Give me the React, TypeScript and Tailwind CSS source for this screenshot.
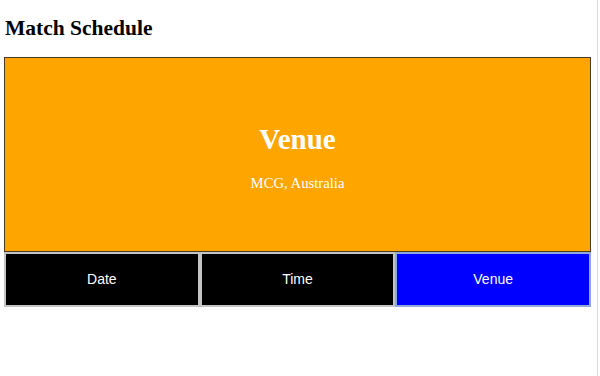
const tabs = ["Date", "Time", "Venue"];

export default function App() {
  const active = "Venue";

  return (
    <div className="w-[598px] min-h-[376px] border-r border-[#dcdcdc] bg-white pl-[4px] pt-[14px]">
      <h2 className="pl-[1px] text-[21.5px] leading-[28px] font-bold text-black font-['Liberation_Serif',serif]">
        Match Schedule
      </h2>
      <div className="mt-[15px] w-[587px]">
        <div className="h-[195px] border border-[#4a3a20] bg-[#ffa500] flex flex-col items-center justify-center font-['Liberation_Serif',serif] text-white">
          <h1 className="text-[29px] leading-[32px] font-bold mt-[6px]">Venue</h1>
          <p className="text-[14.7px] leading-[18px] mt-[19px]">MCG, Australia</p>
        </div>
        <div className="grid grid-cols-3 h-[55px]">
          {tabs.map((t) => (
            <button
              key={t}
              className={`border-2 text-[14px] text-white font-['Liberation_Sans',Arial,sans-serif] ${
                t === active ? "bg-[#0000ff] border-[#8ea9e0]" : "bg-black border-[#c4c4c4]"
              }`}
            >
              {t}
            </button>
          ))}
        </div>
      </div>
    </div>
  );
}
